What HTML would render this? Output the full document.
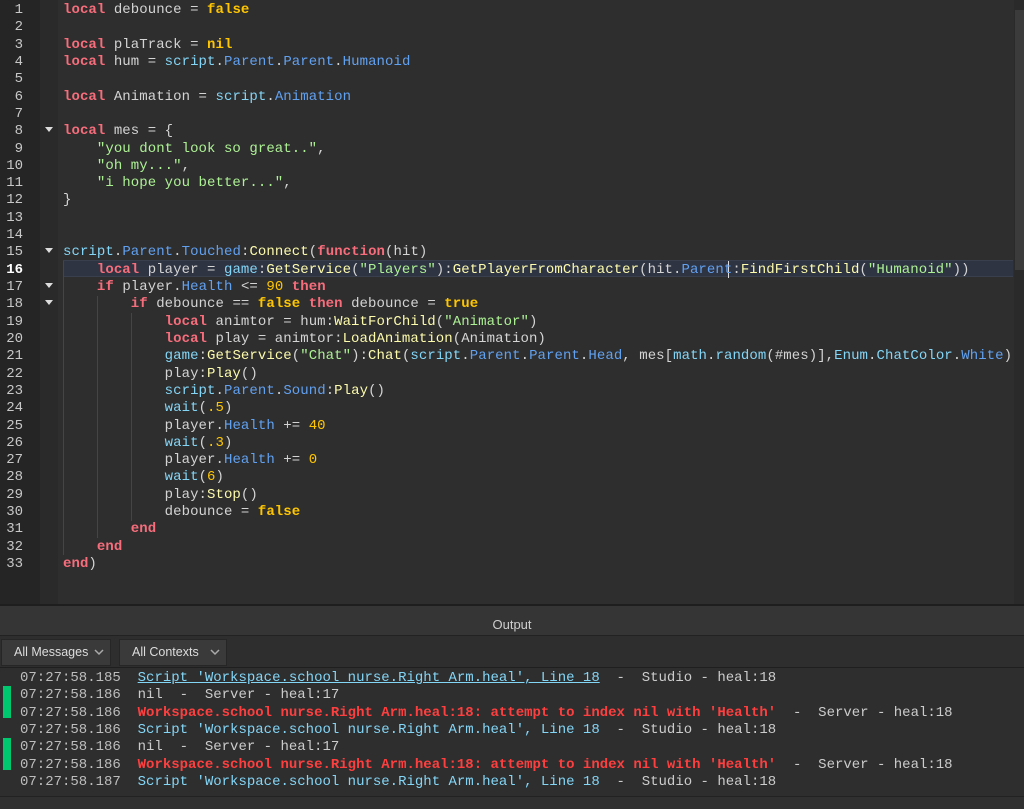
<!DOCTYPE html>
<html><head><meta charset="utf-8"><style>
*{margin:0;padding:0;box-sizing:border-box}
body{width:1024px;height:809px;background:#2e2e2e;overflow:hidden;position:relative;font-family:"Liberation Mono","DejaVu Sans Mono",monospace;}
#gut{position:absolute;left:0;top:0;width:40px;height:604px;background:#252525}
#gut2{position:absolute;left:40px;top:0;width:18px;height:604px;background:#2a2a2a}
#ln{position:absolute;left:0;top:2px;width:23px;text-align:right;font-size:14px;line-height:17.31px;color:#c8c8c8}
#ln b{font-weight:bold;color:#fff}
#code{position:absolute;left:63px;top:2px;font-size:14px;line-height:17.31px;color:#d4d4d4;white-space:pre;letter-spacing:0.07px}
.k{color:#f86d7c;font-weight:bold}.b{color:#ffc600;font-weight:bold}.c{color:#84d6f7}.p{color:#61a1f1}.f{color:#fdfbac}.s{color:#adf195}.n{color:#ffc600}
.hl{position:absolute;left:63px;top:260px;width:950px;height:17.3px;background:#2f3442;border-top:1px solid #3a3f4d;border-bottom:1px solid #3a3f4d}
.guide{position:absolute;width:1px;background:#454545}
.fold{position:absolute;left:45px;width:0;height:0;border-left:4px solid transparent;border-right:4px solid transparent;border-top:5px solid #ddd}
#sb{position:absolute;left:1014px;top:0;width:10px;height:604px;background:#2a2a2a}
#thumb{position:absolute;left:1015px;top:10px;width:9px;height:260px;background:#3b3b3b}
#hdr{position:absolute;left:0;top:604px;width:1024px;height:32px;background:#353535;border-top:2px solid #1e1e1e;border-bottom:1px solid #222;font-family:"Liberation Sans",sans-serif;font-size:13px;color:#cfcfcf;text-align:center;line-height:38px}
#filt{position:absolute;left:0;top:636px;width:1024px;height:32px;background:#2e2e2e;border-bottom:1px solid #1f1f1f}
.dd{position:absolute;top:3px;height:27px;background:#3a3a3a;border:1px solid #262626;font-family:"Liberation Sans",sans-serif;font-size:12.5px;color:#ddd;line-height:25px;padding-left:12px}
.dd svg{position:absolute;right:6px;top:9px}
#log{position:absolute;left:20px;top:670px;font-size:14px;line-height:17.33px;color:#cccccc;white-space:pre}
#log .t{color:#bdbdbd}
.r{color:#ff3f3f;font-weight:bold}
.u{text-decoration:underline}
.gb{position:absolute;left:3px;width:8px;background:#00c86f}
#bot{position:absolute;left:0;top:796px;width:1024px;height:13px;background:#303030;border-top:1px solid #222}
</style></head><body>
<div id="gut"></div><div id="gut2"></div>
<div class="hl"></div>
<div id="ln">1<br>2<br>3<br>4<br>5<br>6<br>7<br>8<br>9<br>10<br>11<br>12<br>13<br>14<br>15<br><b>16</b><br>17<br>18<br>19<br>20<br>21<br>22<br>23<br>24<br>25<br>26<br>27<br>28<br>29<br>30<br>31<br>32<br>33</div>
<div class="fold" style="top:127px"></div>
<div class="fold" style="top:248px"></div>
<div class="fold" style="top:283px"></div>
<div class="fold" style="top:300px"></div>
<div class="guide" style="left:63px;top:261px;height:294px"></div>
<div class="guide" style="left:97px;top:296px;height:242px"></div>
<div class="guide" style="left:131px;top:313px;height:208px"></div>
<div style="position:absolute;left:728px;top:261px;width:1px;height:17px;background:#ddd"></div>
<div id="code"><span class="k">local</span> debounce = <span class="b">false</span>

<span class="k">local</span> plaTrack = <span class="b">nil</span>
<span class="k">local</span> hum = <span class="c">script</span>.<span class="p">Parent</span>.<span class="p">Parent</span>.<span class="p">Humanoid</span>

<span class="k">local</span> Animation = <span class="c">script</span>.<span class="p">Animation</span>

<span class="k">local</span> mes = {
    <span class="s">"you dont look so great.."</span>,
    <span class="s">"oh my..."</span>,
    <span class="s">"i hope you better..."</span>,
}


<span class="c">script</span>.<span class="p">Parent</span>.<span class="p">Touched</span>:<span class="f">Connect</span>(<span class="k">function</span>(hit)
    <span class="k">local</span> player = <span class="c">game</span>:<span class="f">GetService</span>(<span class="s">"Players"</span>):<span class="f">GetPlayerFromCharacter</span>(hit.<span class="p">Parent</span>:<span class="f">FindFirstChild</span>(<span class="s">"Humanoid"</span>))
    <span class="k">if</span> player.<span class="p">Health</span> &lt;= <span class="n">90</span> <span class="k">then</span>
        <span class="k">if</span> debounce == <span class="b">false</span> <span class="k">then</span> debounce = <span class="b">true</span>
            <span class="k">local</span> animtor = hum:<span class="f">WaitForChild</span>(<span class="s">"Animator"</span>)
            <span class="k">local</span> play = animtor:<span class="f">LoadAnimation</span>(Animation)
            <span class="c">game</span>:<span class="f">GetService</span>(<span class="s">"Chat"</span>):<span class="f">Chat</span>(<span class="c">script</span>.<span class="p">Parent</span>.<span class="p">Parent</span>.<span class="p">Head</span>, mes[<span class="c">math</span>.<span class="c">random</span>(#mes)],<span class="c">Enum</span>.<span class="c">ChatColor</span>.<span class="p">White</span>)
            play:<span class="f">Play</span>()
            <span class="c">script</span>.<span class="p">Parent</span>.<span class="p">Sound</span>:<span class="f">Play</span>()
            <span class="c">wait</span>(<span class="n">.5</span>)
            player.<span class="p">Health</span> += <span class="n">40</span>
            <span class="c">wait</span>(<span class="n">.3</span>)
            player.<span class="p">Health</span> += <span class="n">0</span>
            <span class="c">wait</span>(<span class="n">6</span>)
            play:<span class="f">Stop</span>()
            debounce = <span class="b">false</span>
        <span class="k">end</span>
    <span class="k">end</span>
<span class="k">end</span>)</div>
<div id="sb"></div><div id="thumb"></div>
<div id="hdr">Output</div>
<div id="filt">
<div class="dd" style="left:1px;width:110px">All Messages<svg width="10" height="7" viewBox="0 0 10 7"><path d="M1 1 L5 5 L9 1" fill="none" stroke="#aaa" stroke-width="1.5"/></svg></div>
<div class="dd" style="left:119px;width:108px">All Contexts<svg width="10" height="7" viewBox="0 0 10 7"><path d="M1 1 L5 5 L9 1" fill="none" stroke="#aaa" stroke-width="1.5"/></svg></div>
</div>
<div class="gb" style="top:686px;height:32px"></div>
<div class="gb" style="top:738px;height:32px"></div>
<div id="log"><span class="t">07:27:58.185</span>  <span class="c u">Script 'Workspace.school nurse.Right Arm.heal', Line 18</span>  -  Studio - heal:18
<span class="t">07:27:58.186</span>  nil  -  Server - heal:17
<span class="t">07:27:58.186</span>  <span class="r">Workspace.school nurse.Right Arm.heal:18: attempt to index nil with 'Health'</span>  -  Server - heal:18
<span class="t">07:27:58.186</span>  <span class="c">Script 'Workspace.school nurse.Right Arm.heal', Line 18</span>  -  Studio - heal:18
<span class="t">07:27:58.186</span>  nil  -  Server - heal:17
<span class="t">07:27:58.186</span>  <span class="r">Workspace.school nurse.Right Arm.heal:18: attempt to index nil with 'Health'</span>  -  Server - heal:18
<span class="t">07:27:58.187</span>  <span class="c">Script 'Workspace.school nurse.Right Arm.heal', Line 18</span>  -  Studio - heal:18</div>
<div id="bot"></div>
</body></html>
